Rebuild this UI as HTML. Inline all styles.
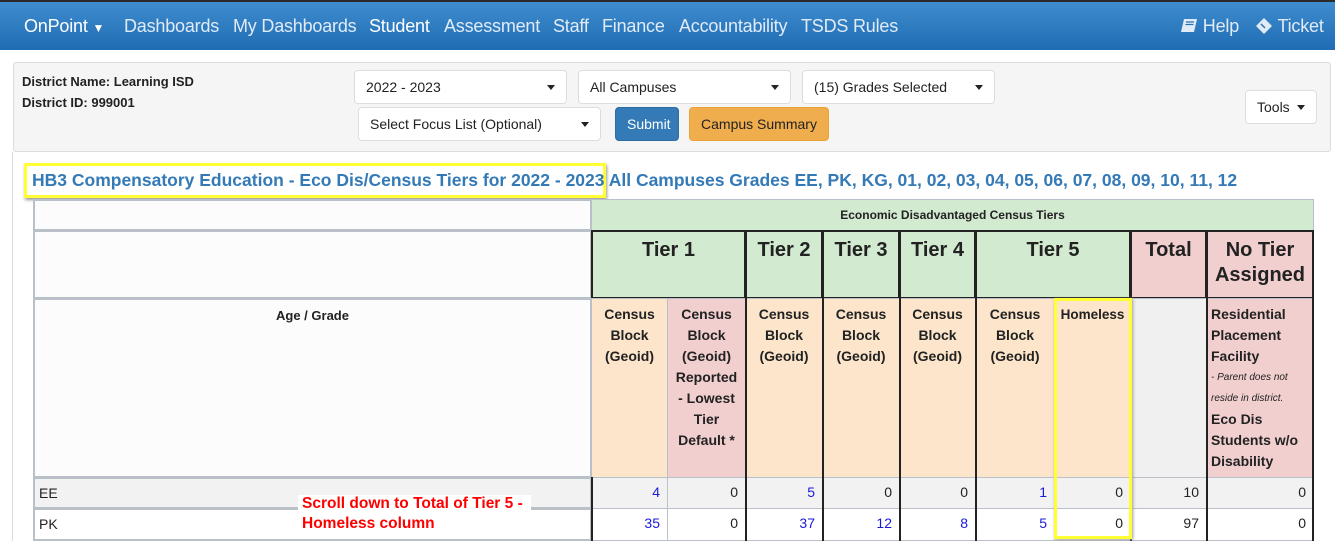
<!DOCTYPE html>
<html><head><meta charset="utf-8"><style>
*{box-sizing:border-box;margin:0;padding:0}
body{width:1335px;height:541px;overflow:hidden;background:#fff;font-family:"Liberation Sans",Arial,sans-serif;position:relative;color:#222}
.a{position:absolute}
#nav{left:0;top:0;width:1335px;height:50px;background:linear-gradient(#3f8ccf,#1f6cb3);border-top:2px solid #2a2a2a}
.n{position:absolute;top:14px;font-size:18px;color:#e1ebf6;white-space:nowrap;letter-spacing:-0.2px}
#panel{left:13px;top:62px;width:1318px;height:90px;background:#f5f5f5;border:1px solid #ddd;border-radius:3px}
.sel{position:absolute;height:34px;background:#fff;border:1px solid #ddd;border-radius:4px;font-size:14px;padding:8px 11px;color:#222}
.sel:after{content:"";position:absolute;right:11px;top:14px;border-left:4px solid transparent;border-right:4px solid transparent;border-top:5px solid #222}
.btn{position:absolute;height:34px;border-radius:4px;font-size:14px;padding:8px 11px}
.c{position:absolute;border:1px solid #b9c0c7;font-size:14px}
.hd{font-weight:bold;text-align:center;line-height:21px;padding-top:5px;font-size:14px}
.tier{font-size:20px;font-weight:bold;text-align:center;padding-top:6px;line-height:25px}
.num{text-align:right;padding:6px 7px 0 0}
.bl{color:#1a1adb}
.dk{border-color:#222}
</style></head><body>
<div id="nav" class="a">
<div class="n" style="left:24px;color:#fff">OnPoint <span style="font-size:12px">&#9660;</span></div>
<div class="n" style="left:124px">Dashboards</div>
<div class="n" style="left:233px">My Dashboards</div>
<div class="n" style="left:369px;color:#fff">Student</div>
<div class="n" style="left:444px">Assessment</div>
<div class="n" style="left:553px">Staff</div>
<div class="n" style="left:602px">Finance</div>
<div class="n" style="left:679px">Accountability</div>
<div class="n" style="left:801px">TSDS Rules</div>
<div class="n" style="left:1180px"><svg width="18" height="16" viewBox="0 0 18 16" style="vertical-align:-2px"><path d="M4 1h13l-3 13H1z" fill="#e1ebf6"/><path d="M6 4h8M5.5 6.5h8" stroke="#2a72b8" stroke-width="1.3"/></svg> Help</div>
<div class="n" style="left:1255px"><svg width="18" height="16" viewBox="0 0 18 16" style="vertical-align:-2px"><path d="M9 0l8 8-8 8-8-8z" fill="#e1ebf6"/><path d="M6 6l4 4" stroke="#2a72b8" stroke-width="1.5"/></svg> Ticket</div>
</div>
<div id="panel" class="a">
<div class="a" style="left:8px;top:8px;font-size:13px;font-weight:bold;line-height:21px">District Name: Learning ISD<br>District ID: 999001</div>
<div class="sel" style="left:340px;top:7px;width:213px">2022 - 2023</div>
<div class="sel" style="left:564px;top:7px;width:213px">All Campuses</div>
<div class="sel" style="left:788px;top:7px;width:193px">(15) Grades Selected</div>
<div class="sel" style="left:344px;top:44px;width:243px">Select Focus List (Optional)</div>
<div class="btn" style="left:601px;top:44px;width:64px;background:#337ab7;color:#fff;border:1px solid #2e6da4;text-align:center">Submit</div>
<div class="btn" style="left:675px;top:44px;width:140px;background:#f0ad4e;color:#222;border:1px solid #eea236;text-align:center">Campus Summary</div>
<div class="sel" style="left:1231px;top:27px;width:72px;padding-right:0">Tools</div>
</div>
<div class="a" style="left:12px;top:152px;width:1px;height:389px;background:#ddd"></div>
<div class="a" style="left:24px;top:163px;width:582px;height:35px;border:3px solid #ffff33;box-shadow:1px 2px 3px #999"></div>
<div class="a" style="left:32px;top:170px;font-size:17.5px;font-weight:bold;color:#337ab7;white-space:nowrap">HB3 Compensatory Education - Eco Dis/Census Tiers for 2022 - 2023 All Campuses Grades EE, PK, KG, 01, 02, 03, 04, 05, 06, 07, 08, 09, 10, 11, 12</div>

<div class="c" style="left:33px;top:199px;width:559px;height:32px;background:#fcfcfc;border-width:2px"></div>
<div class="c" style="left:591px;top:199px;width:723px;height:32px;background:#d2ead0;font-size:12px;font-weight:bold;text-align:center;padding-top:8px">Economic Disadvantaged Census Tiers</div>
<div class="c" style="left:33px;top:230px;width:559px;height:69px;background:#fcfcfc;border-width:2px"></div>
<div class="c dk tier" style="left:591px;top:230px;width:155px;height:69px;background:#d2ead0;border-width:2px">Tier 1</div>
<div class="c dk tier" style="left:745px;top:230px;width:78px;height:69px;background:#d2ead0;border-width:2px">Tier 2</div>
<div class="c dk tier" style="left:822px;top:230px;width:78px;height:69px;background:#d2ead0;border-width:2px">Tier 3</div>
<div class="c dk tier" style="left:899px;top:230px;width:77px;height:69px;background:#d2ead0;border-width:2px">Tier 4</div>
<div class="c dk tier" style="left:975px;top:230px;width:156px;height:69px;background:#d2ead0;border-width:2px">Tier 5</div>
<div class="c dk tier" style="left:1130px;top:230px;width:77px;height:69px;background:#f2cfcf;border-width:2px">Total</div>
<div class="c dk tier" style="left:1206px;top:230px;width:108px;height:69px;background:#f2cfcf;border-width:2px">No Tier Assigned</div>

<div class="c hd" style="left:33px;top:298px;width:559px;height:180px;background:#fcfcfc;border-width:2px;font-size:13px">Age / Grade</div>
<div class="c hd" style="left:591px;top:298px;width:77px;height:180px;background:#fce5cb">Census<br>Block<br>(Geoid)</div>
<div class="c hd" style="left:667px;top:298px;width:79px;height:180px;background:#f2cfcf">Census<br>Block<br>(Geoid)<br>Reported<br>- Lowest<br>Tier<br>Default *</div>
<div class="c hd" style="left:745px;top:298px;width:78px;height:180px;background:#fce5cb">Census<br>Block<br>(Geoid)</div>
<div class="c hd" style="left:822px;top:298px;width:78px;height:180px;background:#fce5cb">Census<br>Block<br>(Geoid)</div>
<div class="c hd" style="left:899px;top:298px;width:77px;height:180px;background:#fce5cb">Census<br>Block<br>(Geoid)</div>
<div class="c hd" style="left:975px;top:298px;width:80px;height:180px;background:#fce5cb">Census<br>Block<br>(Geoid)</div>
<div class="c hd" style="left:1054px;top:298px;width:77px;height:180px;background:#fce5cb;font-size:13.5px">Homeless</div>
<div class="c" style="left:1130px;top:298px;width:77px;height:180px;background:#f0f0f0"></div>
<div class="c hd" style="left:1206px;top:298px;width:108px;height:180px;background:#f2cfcf;text-align:left;padding-left:4px">Residential<br>Placement<br>Facility<div style="font-size:10px;font-style:italic;font-weight:normal">- Parent does not reside in district.</div>Eco Dis<br>Students w/o<br>Disability</div>

<div class="c" style="left:33px;top:477px;width:559px;height:32px;background:#f2f2f2;border-width:2px;padding:6px 0 0 4px">EE</div>
<div class="c num bl" style="left:591px;top:477px;width:77px;height:32px;background:#f2f2f2">4</div>
<div class="c num" style="left:667px;top:477px;width:79px;height:32px;background:#f2f2f2">0</div>
<div class="c num bl" style="left:745px;top:477px;width:78px;height:32px;background:#f2f2f2">5</div>
<div class="c num" style="left:822px;top:477px;width:78px;height:32px;background:#f2f2f2">0</div>
<div class="c num" style="left:899px;top:477px;width:77px;height:32px;background:#f2f2f2">0</div>
<div class="c num bl" style="left:975px;top:477px;width:80px;height:32px;background:#f2f2f2">1</div>
<div class="c num" style="left:1054px;top:477px;width:77px;height:32px;background:#f2f2f2">0</div>
<div class="c num" style="left:1130px;top:477px;width:77px;height:32px;background:#f2f2f2">10</div>
<div class="c num" style="left:1206px;top:477px;width:108px;height:32px;background:#f2f2f2">0</div>

<div class="c" style="left:33px;top:508px;width:559px;height:33px;background:#fff;border-width:2px;padding:6px 0 0 4px">PK</div>
<div class="c num bl" style="left:591px;top:508px;width:77px;height:33px">35</div>
<div class="c num" style="left:667px;top:508px;width:79px;height:33px">0</div>
<div class="c num bl" style="left:745px;top:508px;width:78px;height:33px">37</div>
<div class="c num bl" style="left:822px;top:508px;width:78px;height:33px">12</div>
<div class="c num bl" style="left:899px;top:508px;width:77px;height:33px">8</div>
<div class="c num bl" style="left:975px;top:508px;width:80px;height:33px">5</div>
<div class="c num" style="left:1054px;top:508px;width:77px;height:33px">0</div>
<div class="c num" style="left:1130px;top:508px;width:77px;height:33px">97</div>
<div class="c num" style="left:1206px;top:508px;width:108px;height:33px">0</div>

<div class="a" style="left:591px;top:477px;width:2px;height:64px;background:#222"></div>
<div class="a" style="left:745px;top:298px;width:2px;height:243px;background:#222"></div>
<div class="a" style="left:822px;top:298px;width:2px;height:243px;background:#222"></div>
<div class="a" style="left:899px;top:298px;width:2px;height:243px;background:#222"></div>
<div class="a" style="left:975px;top:298px;width:2px;height:243px;background:#222"></div>
<div class="a" style="left:1130px;top:298px;width:2px;height:243px;background:#222"></div>
<div class="a" style="left:1206px;top:298px;width:2px;height:243px;background:#222"></div>
<div class="a" style="left:1312px;top:298px;width:2px;height:243px;background:#222"></div>

<div class="a" style="left:1054px;top:298px;width:78px;height:241px;border:3px solid #ffff33;box-shadow:1px 1px 3px #999"></div>
<div class="a" style="left:298px;top:494px;font-size:15.5px;font-weight:bold;color:#f00;line-height:20px"><span style="background:#fff;padding:0 8px 0 4px">Scroll down to Total of Tier 5 -</span><br><span style="padding-left:4px">Homeless column</span></div>
</body></html>
